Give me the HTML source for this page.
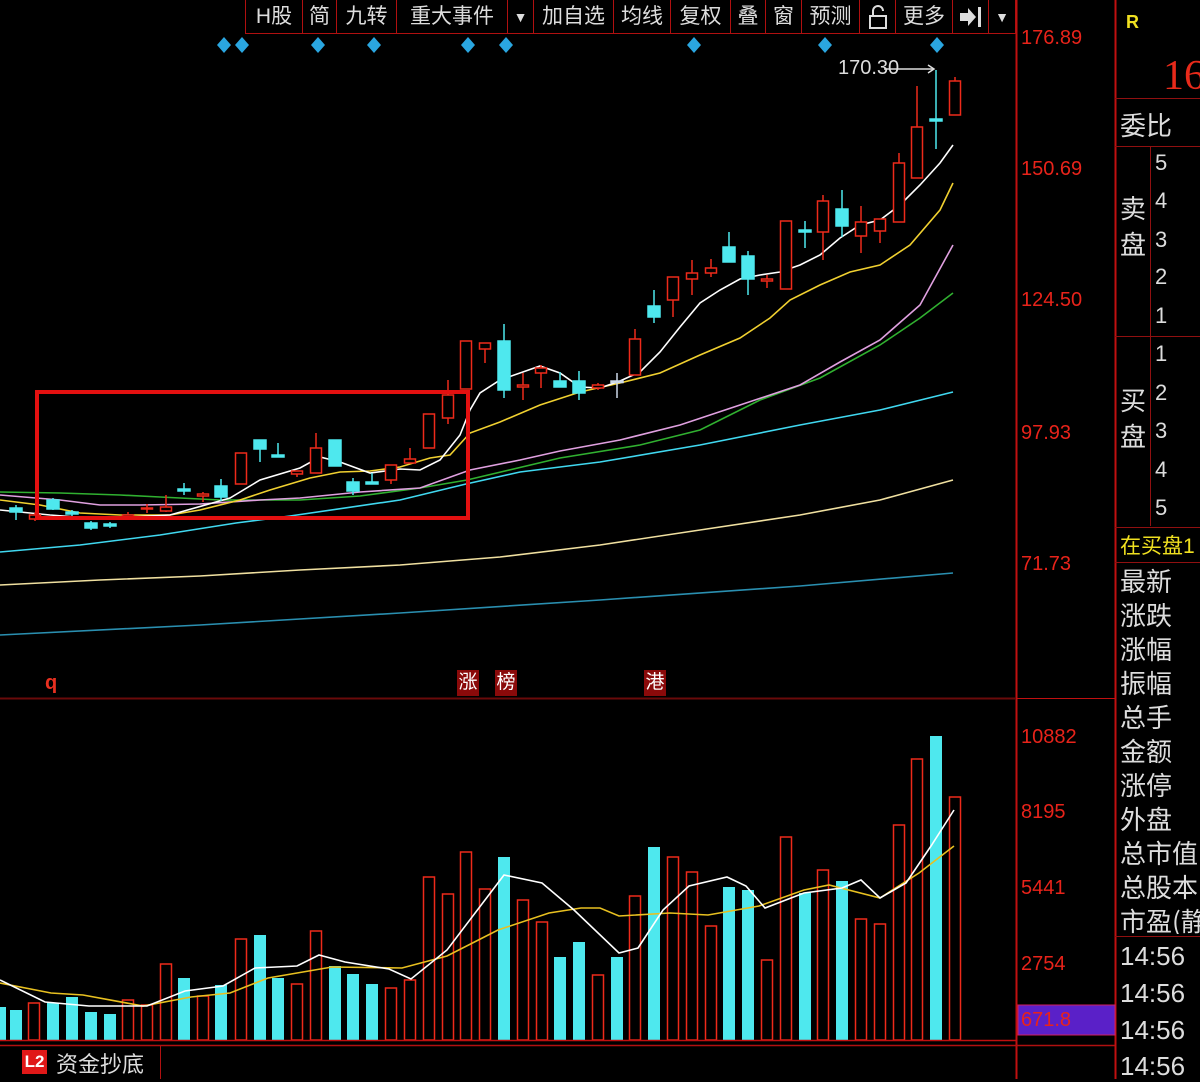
<!DOCTYPE html>
<html><head><meta charset="utf-8">
<style>
html,body{margin:0;padding:0;background:#000;}
body{width:1200px;height:1079px;overflow:hidden;position:relative;font-family:"Liberation Sans","Noto Sans CJK SC",sans-serif;}
.t{position:absolute;white-space:nowrap;}
.tb{position:absolute;top:0;height:34px;border:1px solid #b01010;border-top:none;color:#ddd;font-size:21px;line-height:34px;text-align:center;box-sizing:border-box;font-family:"Liberation Sans","WenQuanYi Zen Hei",sans-serif;}
.ax{position:absolute;left:1021px;color:#e8231a;font-size:20px;font-family:"Liberation Sans",sans-serif;}
.rp{position:absolute;left:1120px;width:80px;overflow:hidden;white-space:nowrap;color:#ddd;font-size:26px;line-height:34px;font-family:"WenQuanYi Zen Hei","Noto Sans CJK SC",sans-serif;}
.n{position:absolute;left:1155px;color:#ddd;font-size:22px;}
.tm{position:absolute;left:1120px;color:#ddd;font-size:26px;font-family:"Liberation Sans",sans-serif;}
.bd{position:absolute;top:670px;width:22px;height:26px;background:#8a0a0a;color:#fff;font-size:19px;line-height:26px;text-align:center;font-family:"WenQuanYi Zen Hei",sans-serif;}
</style></head><body>
<svg width="1200" height="1079" style="position:absolute;left:0;top:0">
<line x1="1016.5" y1="0" x2="1016.5" y2="1079" stroke="#c01010" stroke-width="2"/>
<line x1="1115.5" y1="0" x2="1115.5" y2="1079" stroke="#c01010" stroke-width="2"/>
<line x1="0" y1="698.5" x2="1016" y2="698.5" stroke="#6a0a0a" stroke-width="2"/>
<line x1="1016" y1="698.5" x2="1115" y2="698.5" stroke="#c01010" stroke-width="1"/>
<line x1="0" y1="1045.5" x2="1115" y2="1045.5" stroke="#b01010" stroke-width="1.5"/>
<line x1="160.5" y1="1045" x2="160.5" y2="1079" stroke="#b01010"/>
<line x1="1115" y1="98.5" x2="1200" y2="98.5" stroke="#901010"/>
<line x1="1115" y1="146.5" x2="1200" y2="146.5" stroke="#901010"/>
<line x1="1150.5" y1="146" x2="1150.5" y2="526" stroke="#901010"/>
<line x1="1115" y1="336.5" x2="1200" y2="336.5" stroke="#901010"/>
<line x1="1115" y1="527.5" x2="1200" y2="527.5" stroke="#901010"/>
<line x1="1115" y1="562.5" x2="1200" y2="562.5" stroke="#901010"/>
<line x1="1115" y1="936.5" x2="1200" y2="936.5" stroke="#901010"/>
<rect x="1018" y="1005" width="97" height="30" fill="#5a20c8" stroke="#d02060"/>
<g fill="#2aa6e0">
<path d="M224 37l7 8-7 8-7-8z"/><path d="M242 37l7 8-7 8-7-8z"/><path d="M318 37l7 8-7 8-7-8z"/><path d="M374 37l7 8-7 8-7-8z"/><path d="M468 37l7 8-7 8-7-8z"/><path d="M506 37l7 8-7 8-7-8z"/><path d="M694 37l7 8-7 8-7-8z"/><path d="M825 37l7 8-7 8-7-8z"/><path d="M937 37l7 8-7 8-7-8z"/>
</g>
<g fill="none" stroke-width="1.6">
<polyline stroke="#2a8fb0" points="0,635 200,625 400,613 600,600 800,586 953,573"/>
<polyline stroke="#f0e0a0" points="0,585 100,580 200,576 300,570 400,565 500,557 600,545 700,530 800,515 880,500 953,480"/>
<polyline stroke="#40d8f0" points="0,552 80,545 160,535 236,523 290,516 400,500 466,484 520,472 600,462 700,445 800,425 880,410 953,392"/>
<polyline stroke="#30b030" points="0,492 60,493 120,495 160,497 220,500 300,500 360,496 420,488 467,480 560,458 640,445 700,430 760,400 820,378 880,345 920,318 953,293"/>
<polyline stroke="#e0a0e0" points="0,495 60,500 100,505 140,505 200,504 260,500 300,498 360,492 420,488 470,470 520,460 560,451 620,440 680,425 740,405 800,385 840,362 880,340 920,305 953,245"/>
<polyline stroke="#f0d030" points="0,500 40,505 80,513 120,515 170,515 200,510 240,500 270,490 310,478 340,472 370,471 400,467 430,458 450,455 470,433 500,422 540,405 580,392 620,383 660,373 700,355 740,338 770,318 790,300 820,285 850,272 880,265 910,245 940,210 953,183"/>
<polyline stroke="#ffffff" points="0,510 50,515 90,518 130,517 170,515 230,498 260,480 300,468 320,457 340,462 370,473 400,469 420,470 440,460 460,435 470,410 480,393 500,380 540,366 560,373 580,387 600,388 620,381 640,372 660,352 680,327 700,303 720,290 740,279 760,275 780,272 800,265 820,255 840,238 860,225 880,220 900,205 920,185 940,163 953,145"/>
</g>
<g stroke-width="1.5">
<g stroke="#4ee8ee" fill="#4ee8ee">
<line x1="16" y1="505" x2="16" y2="520"/><rect x="10" y="508" width="12" height="4"/>
<line x1="53" y1="498" x2="53" y2="510"/><rect x="47" y="500" width="12" height="9"/>
<line x1="72" y1="510" x2="72" y2="516"/><rect x="66" y="512" width="12" height="2"/>
<line x1="91" y1="521" x2="91" y2="530"/><rect x="85" y="523" width="12" height="5"/>
<line x1="110" y1="522" x2="110" y2="528"/><rect x="104" y="524" width="12" height="2"/>
<line x1="184" y1="483" x2="184" y2="495"/><rect x="178" y="489" width="12" height="2"/>
<line x1="221" y1="479" x2="221" y2="501"/><rect x="215" y="486" width="12" height="11"/>
<line x1="260" y1="440" x2="260" y2="462"/><rect x="254" y="440" width="12" height="9"/>
<line x1="278" y1="443" x2="278" y2="457"/><rect x="272" y="455" width="12" height="2"/>
<line x1="335" y1="440" x2="335" y2="466"/><rect x="329" y="440" width="12" height="26"/>
<line x1="353" y1="478" x2="353" y2="495"/><rect x="347" y="482" width="12" height="9"/>
<line x1="372" y1="473" x2="372" y2="484"/><rect x="366" y="482" width="12" height="2"/>
<line x1="504" y1="324" x2="504" y2="398"/><rect x="498" y="341" width="12" height="49"/>
<line x1="560" y1="372" x2="560" y2="387"/><rect x="554" y="381" width="12" height="6"/>
<line x1="579" y1="371" x2="579" y2="400"/><rect x="573" y="381" width="12" height="12"/>
<line x1="654" y1="290" x2="654" y2="323"/><rect x="648" y="306" width="12" height="11"/>
<line x1="729" y1="232" x2="729" y2="262"/><rect x="723" y="247" width="12" height="15"/>
<line x1="748" y1="251" x2="748" y2="295"/><rect x="742" y="256" width="12" height="23"/>
<line x1="805" y1="221" x2="805" y2="248"/><rect x="799" y="230" width="12" height="2"/>
<line x1="842" y1="190" x2="842" y2="237"/><rect x="836" y="209" width="12" height="17"/>
<line x1="936" y1="70" x2="936" y2="149"/><rect x="930" y="119" width="12" height="2"/>
</g>
<g stroke="#ccd8e8" fill="#ccd8e8"><line x1="617" y1="373" x2="617" y2="398"/><rect x="611" y="381" width="12" height="1.5"/></g>
<g stroke="#ee2a1a" fill="#000">
<line x1="35" y1="513" x2="35" y2="521"/><rect x="29.5" y="515" width="11" height="4"/>
<line x1="128" y1="512" x2="128" y2="518"/><rect x="122.5" y="515" width="11" height="2"/>
<line x1="147" y1="504" x2="147" y2="513"/><rect x="141.5" y="508" width="11" height="1"/>
<line x1="166" y1="495" x2="166" y2="512"/><rect x="160.5" y="507" width="11" height="4"/>
<line x1="203" y1="492" x2="203" y2="502"/><rect x="197.5" y="494" width="11" height="2"/>
<rect x="235.5" y="453" width="11" height="31"/>
<line x1="297" y1="471" x2="297" y2="477"/><rect x="291.5" y="471" width="11" height="3"/>
<line x1="316" y1="433" x2="316" y2="473"/><rect x="310.5" y="448" width="11" height="25"/>
<line x1="391" y1="465" x2="391" y2="484"/><rect x="385.5" y="465" width="11" height="15"/>
<line x1="410" y1="448" x2="410" y2="463"/><rect x="404.5" y="459" width="11" height="4"/>
<rect x="423.5" y="414" width="11" height="34"/>
<line x1="448" y1="380" x2="448" y2="424"/><rect x="442.5" y="395" width="11" height="23"/>
<rect x="460.5" y="341" width="11" height="48"/>
<line x1="485" y1="343" x2="485" y2="363"/><rect x="479.5" y="343" width="11" height="6"/>
<line x1="523" y1="373" x2="523" y2="400"/><rect x="517.5" y="385" width="11" height="2"/>
<line x1="541" y1="365" x2="541" y2="388"/><rect x="535.5" y="368" width="11" height="5"/>
<line x1="598" y1="383" x2="598" y2="390"/><rect x="592.5" y="385" width="11" height="3"/>
<line x1="635" y1="329" x2="635" y2="375"/><rect x="629.5" y="339" width="11" height="36"/>
<line x1="673" y1="277" x2="673" y2="317"/><rect x="667.5" y="277" width="11" height="23"/>
<line x1="692" y1="260" x2="692" y2="295"/><rect x="686.5" y="273" width="11" height="6"/>
<line x1="711" y1="259" x2="711" y2="277"/><rect x="705.5" y="268" width="11" height="5"/>
<line x1="767" y1="275" x2="767" y2="288"/><rect x="761.5" y="279" width="11" height="2"/>
<rect x="780.5" y="221" width="11" height="68"/>
<line x1="823" y1="195" x2="823" y2="260"/><rect x="817.5" y="201" width="11" height="31"/>
<line x1="861" y1="206" x2="861" y2="253"/><rect x="855.5" y="222" width="11" height="14"/>
<line x1="880" y1="219" x2="880" y2="243"/><rect x="874.5" y="219" width="11" height="12"/>
<line x1="899" y1="153" x2="899" y2="222"/><rect x="893.5" y="163" width="11" height="59"/>
<line x1="917" y1="86" x2="917" y2="178"/><rect x="911.5" y="127" width="11" height="51"/>
<line x1="955" y1="77" x2="955" y2="115"/><rect x="949.5" y="81" width="11" height="34"/>
</g>
</g>
<line x1="884" y1="69" x2="934" y2="69" stroke="#ddd" stroke-width="1.5"/>
<path d="M928 65l6 4-6 4" fill="none" stroke="#ddd" stroke-width="1.5"/>
<rect x="37" y="392" width="431" height="126" fill="none" stroke="#e41010" stroke-width="4"/>
<g fill="#4ee8ee">
<rect x="-6" y="1007" width="12" height="33"/><rect x="10" y="1010" width="12" height="30"/><rect x="47" y="1003" width="12" height="37"/><rect x="66" y="997" width="12" height="43"/><rect x="85" y="1012" width="12" height="28"/><rect x="104" y="1014" width="12" height="26"/><rect x="178" y="978" width="12" height="62"/><rect x="215" y="985" width="12" height="55"/><rect x="254" y="935" width="12" height="105"/><rect x="272" y="978" width="12" height="62"/><rect x="329" y="966" width="12" height="74"/><rect x="347" y="974" width="12" height="66"/><rect x="366" y="984" width="12" height="56"/><rect x="498" y="857" width="12" height="183"/><rect x="554" y="957" width="12" height="83"/><rect x="573" y="942" width="12" height="98"/><rect x="611" y="957" width="12" height="83"/><rect x="648" y="847" width="12" height="193"/><rect x="723" y="887" width="12" height="153"/><rect x="742" y="890" width="12" height="150"/><rect x="799" y="893" width="12" height="147"/><rect x="836" y="881" width="12" height="159"/><rect x="930" y="736" width="12" height="304"/>
</g>
<g fill="none" stroke="#ee2a1a" stroke-width="1.5">
<rect x="28.5" y="1003" width="11" height="37"/><rect x="122.5" y="1000" width="11" height="40"/><rect x="141.5" y="1005" width="11" height="35"/><rect x="160.5" y="964" width="11" height="76"/><rect x="197.5" y="996" width="11" height="44"/><rect x="235.5" y="939" width="11" height="101"/><rect x="291.5" y="984" width="11" height="56"/><rect x="310.5" y="931" width="11" height="109"/><rect x="385.5" y="988" width="11" height="52"/><rect x="404.5" y="980" width="11" height="60"/><rect x="423.5" y="877" width="11" height="163"/><rect x="442.5" y="894" width="11" height="146"/><rect x="460.5" y="852" width="11" height="188"/><rect x="479.5" y="889" width="11" height="151"/><rect x="517.5" y="900" width="11" height="140"/><rect x="536.5" y="922" width="11" height="118"/><rect x="592.5" y="975" width="11" height="65"/><rect x="629.5" y="896" width="11" height="144"/><rect x="667.5" y="857" width="11" height="183"/><rect x="686.5" y="872" width="11" height="168"/><rect x="705.5" y="926" width="11" height="114"/><rect x="761.5" y="960" width="11" height="80"/><rect x="780.5" y="837" width="11" height="203"/><rect x="817.5" y="870" width="11" height="170"/><rect x="855.5" y="919" width="11" height="121"/><rect x="874.5" y="924" width="11" height="116"/><rect x="893.5" y="825" width="11" height="215"/><rect x="911.5" y="759" width="11" height="281"/><rect x="949.5" y="797" width="11" height="243"/>
</g>
<line x1="0" y1="1040.5" x2="1016" y2="1040.5" stroke="#c01010" stroke-width="1.5"/>
<g fill="none" stroke-width="1.6">
<polyline stroke="#e8c020" points="0,983 51,993 83,995 143,1006 191,997 230,993 268,978 332,967 402,968 447,956 498,930 549,913 581,908 600,908 619,916 670,913 708,915 759,906 804,890 829,885 880,898 919,873 954,846"/>
<polyline stroke="#ffffff" points="0,980 45,1002 89,1006 147,1006 185,991 223,986 255,968 297,966 319,955 345,962 389,969 411,979 447,950 504,875 542,883 574,910 619,953 638,948 663,910 689,886 727,877 746,886 765,908 804,893 842,888 861,880 880,898 906,883 931,846 954,810"/>
</g>
</svg>

<div class="tb" style="left:245px;width:58px">H股</div>
<div class="tb" style="left:302px;width:35px">简</div>
<div class="tb" style="left:336px;width:61px">九转</div>
<div class="tb" style="left:396px;width:112px">重大事件</div>
<div class="tb" style="left:507px;width:27px;font-size:14px">▼</div>
<div class="tb" style="left:533px;width:81px">加自选</div>
<div class="tb" style="left:613px;width:58px">均线</div>
<div class="tb" style="left:670px;width:61px">复权</div>
<div class="tb" style="left:730px;width:36px">叠</div>
<div class="tb" style="left:765px;width:37px">窗</div>
<div class="tb" style="left:801px;width:59px">预测</div>
<div class="tb" style="left:859px;width:37px">
<svg width="22" height="26" style="margin-top:4px"><path d="M6 12V7a5 5 0 0 1 10 0" fill="none" stroke="#ddd" stroke-width="2"/><rect x="3" y="12" width="16" height="12" fill="none" stroke="#ddd" stroke-width="2"/></svg></div>
<div class="tb" style="left:895px;width:58px">更多</div>
<div class="tb" style="left:952px;width:37px"><svg width="26" height="24" style="margin-top:5px"><path d="M2 8h8V3l8 9-8 9v-5H2z" fill="#ddd"/><rect x="20" y="2" width="3" height="20" fill="#ddd"/></svg></div>
<div class="tb" style="left:988px;width:28px;font-size:14px">▼</div>

<div class="t" style="left:838px;top:57px;color:#ddd;font-size:20px">170.30</div>

<div class="t" style="left:45px;top:672px;color:#e83020;font-size:20px;font-weight:bold">q</div>
<div class="bd" style="left:457px">涨</div>
<div class="bd" style="left:495px">榜</div>
<div class="bd" style="left:644px">港</div>

<div class="ax" style="top:27px">176.89</div>
<div class="ax" style="top:158px">150.69</div>
<div class="ax" style="top:289px">124.50</div>
<div class="ax" style="top:422px">97.93</div>
<div class="ax" style="top:553px">71.73</div>
<div class="ax" style="top:726px">10882</div>
<div class="ax" style="top:801px">8195</div>
<div class="ax" style="top:877px">5441</div>
<div class="ax" style="top:953px">2754</div>
<div class="ax" style="top:1009px">671.8</div>

<div class="t" style="left:1126px;top:12px;color:#f0e020;font-size:18px;font-weight:bold">R</div>
<div class="t" style="left:1163px;top:52px;color:#e82a1a;font-size:42px;font-family:'Liberation Serif',serif">16</div>
<div class="rp" style="top:108px">委比</div>
<div class="rp" style="top:190px;line-height:36px;width:30px">卖<br>盘</div>
<div class="rp" style="top:382px;line-height:36px;width:30px">买<br>盘</div>
<div class="n" style="top:150px">5</div><div class="n" style="top:188px">4</div><div class="n" style="top:227px">3</div><div class="n" style="top:264px">2</div><div class="n" style="top:303px">1</div>
<div class="n" style="top:341px">1</div><div class="n" style="top:380px">2</div><div class="n" style="top:418px">3</div><div class="n" style="top:457px">4</div><div class="n" style="top:495px">5</div>
<div class="t" style="left:1120px;top:530px;color:#f0e020;font-size:21px;font-family:'WenQuanYi Zen Hei',sans-serif">在买盘1</div>
<div class="rp" style="top:564px;height:370px">最新<br>涨跌<br>涨幅<br>振幅<br>总手<br>金额<br>涨停<br>外盘<br>总市值<br>总股本<br>市盈(静</div>
<div class="tm" style="top:941px">14:56</div>
<div class="tm" style="top:978px">14:56</div>
<div class="tm" style="top:1015px">14:56</div>
<div class="tm" style="top:1051px">14:56</div>

<div class="t" style="left:22px;top:1050px;width:25px;height:24px;background:#e01818;color:#fff;font-size:17px;font-weight:bold;line-height:24px;text-align:center">L2</div>
<div class="t" style="left:56px;top:1047px;color:#ddd;font-size:22px;font-family:'WenQuanYi Zen Hei',sans-serif">资金抄底</div>
</body></html>
